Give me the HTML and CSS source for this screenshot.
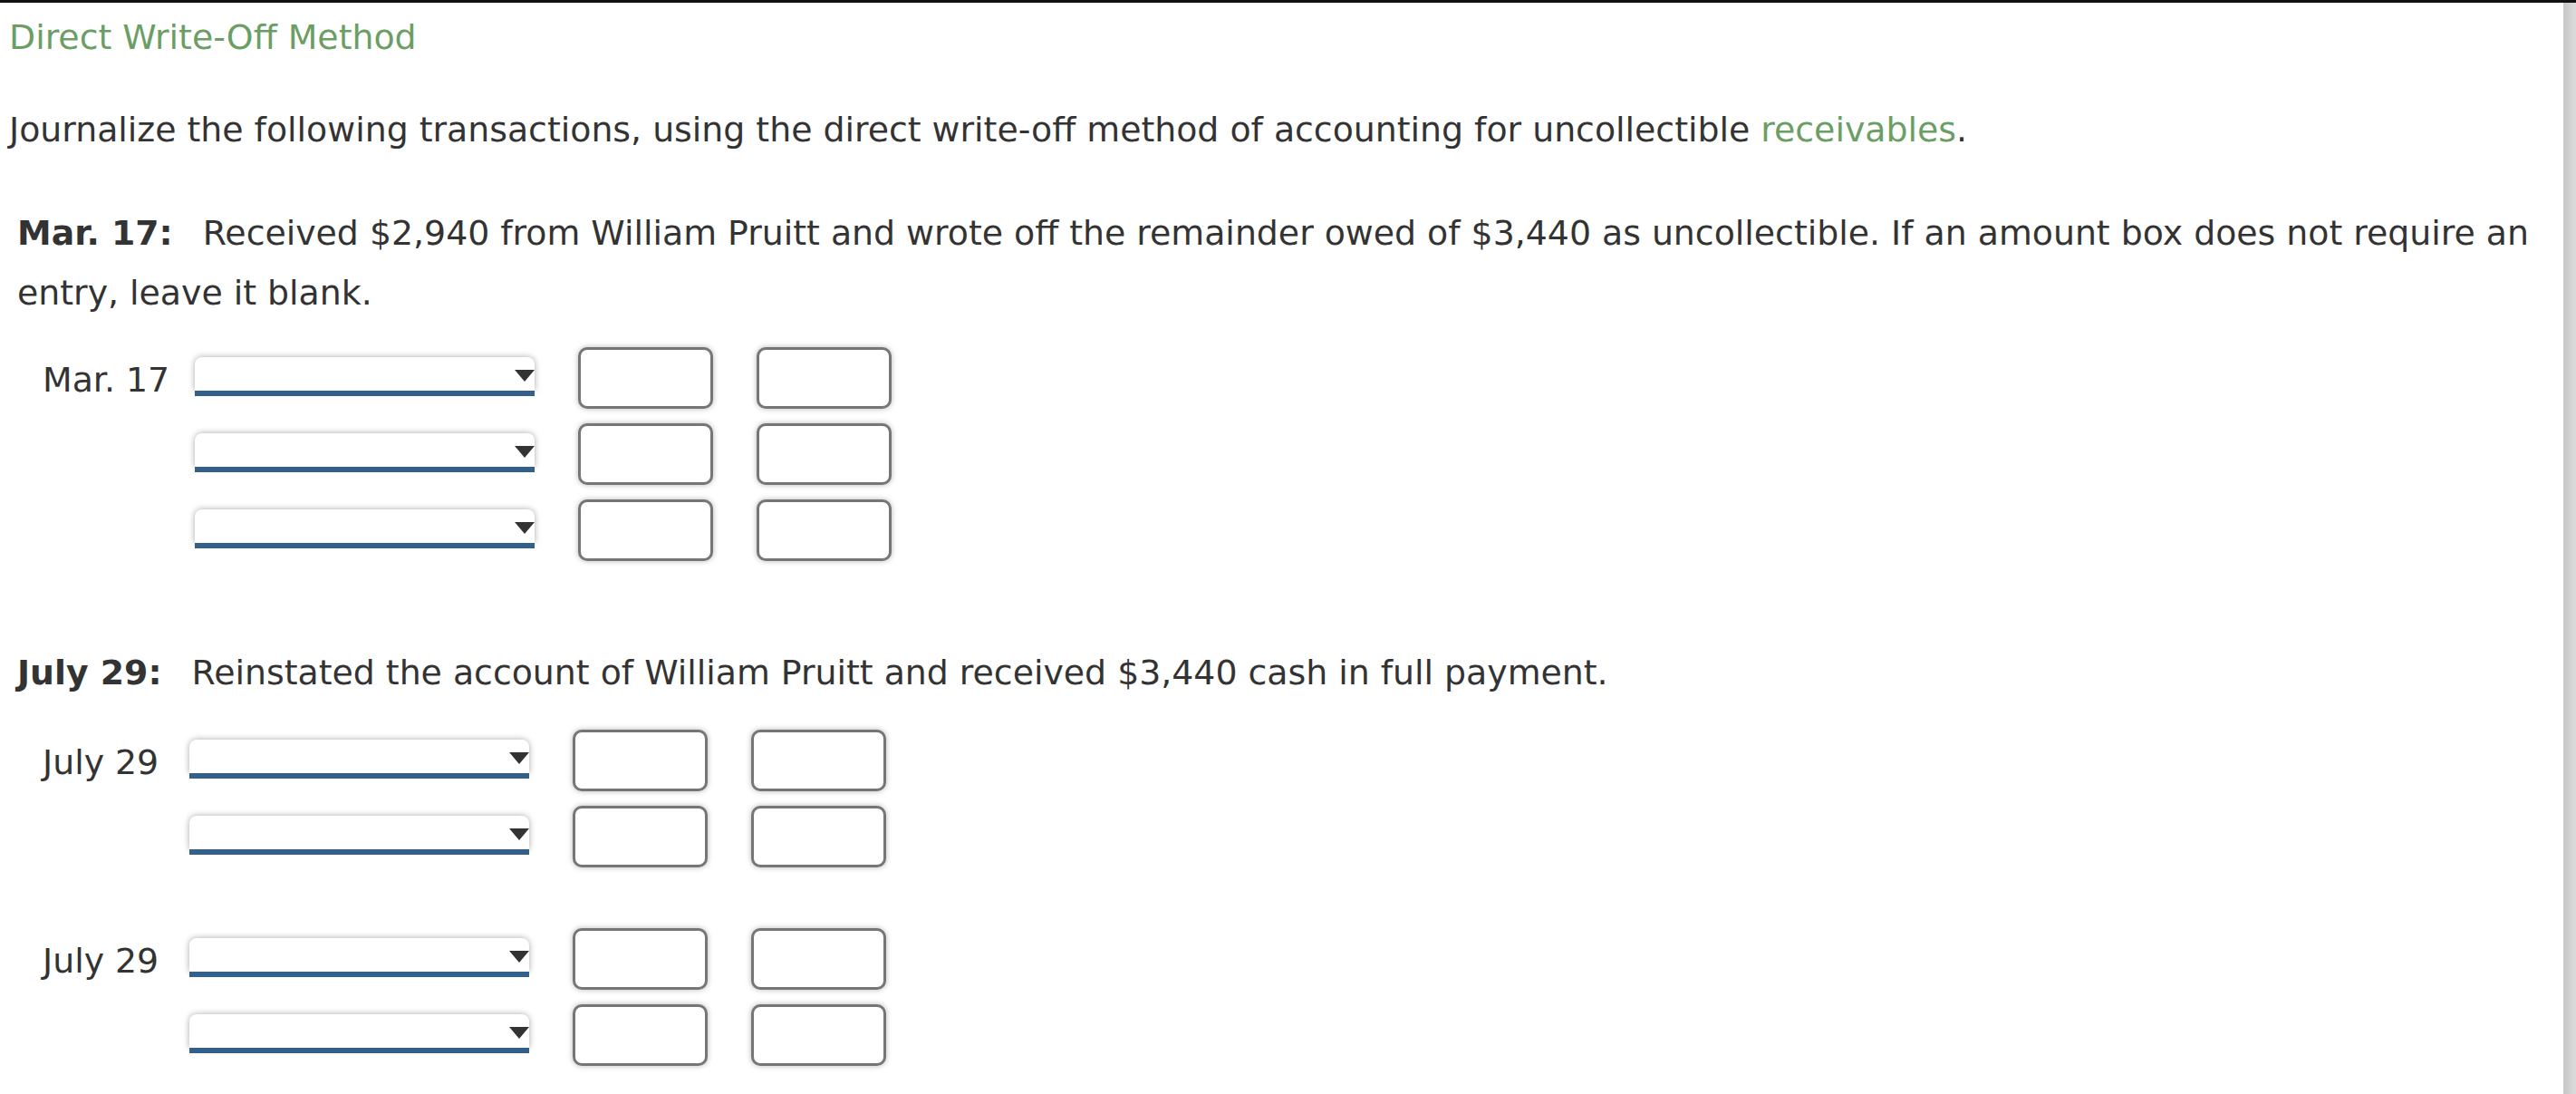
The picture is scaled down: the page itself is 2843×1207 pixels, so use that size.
FILE: index.html
```html
<!DOCTYPE html>
<html lang="en">
<head>
<meta charset="utf-8">
<title>Direct Write-Off Method</title>
<link rel="stylesheet" href="styles.css">
</head>
<body>
<div class="topbar"></div>
<div class="frame">
  <main class="page">
    <h1 class="title">Direct Write-Off Method</h1>
    <p class="intro">Journalize the following transactions, using the direct write-off method of accounting for uncollectible <span class="link">receivables</span>.</p>

    <section class="section">
      <p class="prompt"><b>Mar. 17:</b> Received $2,940 from William Pruitt and wrote off the remainder owed of $3,440 as uncollectible. If an amount box does not require an entry, leave it blank.</p>
      <div class="entry entry-mar">
        <div class="label">Mar. 17</div>
        <div class="select"><div class="select-box"><svg class="caret" width="22" height="13" viewBox="0 0 22 13"><polygon points="0,0 22,0 11,13"/></svg></div><div class="select-line"></div></div>
        <div class="amount"></div>
        <div class="amount"></div>

        <div class="label"></div>
        <div class="select"><div class="select-box"><svg class="caret" width="22" height="13" viewBox="0 0 22 13"><polygon points="0,0 22,0 11,13"/></svg></div><div class="select-line"></div></div>
        <div class="amount"></div>
        <div class="amount"></div>

        <div class="label"></div>
        <div class="select"><div class="select-box"><svg class="caret" width="22" height="13" viewBox="0 0 22 13"><polygon points="0,0 22,0 11,13"/></svg></div><div class="select-line"></div></div>
        <div class="amount"></div>
        <div class="amount"></div>
      </div>
    </section>

    <section class="section section-jul">
      <p class="prompt"><b>July 29:</b> Reinstated the account of William Pruitt and received $3,440 cash in full payment.</p>
      <div class="entry entry-jul">
        <div class="label">July 29</div>
        <div class="select"><div class="select-box"><svg class="caret" width="22" height="13" viewBox="0 0 22 13"><polygon points="0,0 22,0 11,13"/></svg></div><div class="select-line"></div></div>
        <div class="amount"></div>
        <div class="amount"></div>

        <div class="label"></div>
        <div class="select"><div class="select-box"><svg class="caret" width="22" height="13" viewBox="0 0 22 13"><polygon points="0,0 22,0 11,13"/></svg></div><div class="select-line"></div></div>
        <div class="amount"></div>
        <div class="amount"></div>
      </div>

      <div class="entry entry-jul entry-second">
        <div class="label">July 29</div>
        <div class="select"><div class="select-box"><svg class="caret" width="22" height="13" viewBox="0 0 22 13"><polygon points="0,0 22,0 11,13"/></svg></div><div class="select-line"></div></div>
        <div class="amount"></div>
        <div class="amount"></div>

        <div class="label"></div>
        <div class="select"><div class="select-box"><svg class="caret" width="22" height="13" viewBox="0 0 22 13"><polygon points="0,0 22,0 11,13"/></svg></div><div class="select-line"></div></div>
        <div class="amount"></div>
        <div class="amount"></div>
      </div>
    </section>
  </main>
  <div class="scrolltrack"></div>
</div>
</body>
</html>
```

FILE: styles.css
```css
html, body {
  margin: 0;
  padding: 0;
  background: #ffffff;
}

body {
  font-family: "DejaVu Sans", Verdana, sans-serif;
  font-size: 37.85px;
  line-height: 66px;
  color: #333333;
  height: 1207px;
  overflow: hidden;
}

.topbar {
  height: 3px;
  background: #111111;
}

.frame {
  display: flex;
  height: 1204px;
}

.page {
  flex: 1;
  padding-left: 10px;
  min-width: 0;
}

.scrolltrack {
  width: 14px;
  background: linear-gradient(to right, #c6c6c6, #dcdcdc);
}

.title {
  margin: 5px 0 0 0;
  font-size: 37.85px;
  font-weight: normal;
  line-height: 66px;
  color: #6b9e65;
}

.intro {
  margin: 36px 0 0 0;
}

.link {
  color: #6b9e65;
}

.section {
  padding-left: 9px;
  margin-top: 48px;
}

.section-jul {
  margin-top: 90px;
}

.prompt {
  margin: 0;
}

.prompt b {
  font-weight: bold;
  margin-right: 21px;
}

.entry {
  display: grid;
  grid-auto-rows: 68px;
  row-gap: 16px;
  column-gap: 48px;
  margin-top: 27px;
}

.entry-mar {
  grid-template-columns: 148px 375px 149px 149px;
}

.entry-jul {
  grid-template-columns: 142px 375px 149px 149px;
  margin-top: 30px;
}

.entry-second {
  margin-top: 67px;
}

.label {
  padding-left: 28px;
  padding-top: 4px;
  line-height: 64px;
  white-space: nowrap;
}

.select {
  align-self: start;
  margin-top: 11px;
  width: 375px;
}

.select-box {
  height: 37px;
  background: #ffffff;
  border-radius: 8px 8px 0 0;
  box-shadow: 0 0 7px rgba(0, 0, 0, 0.35);
  display: flex;
  align-items: center;
  justify-content: flex-end;
}

.caret {
  display: block;
  margin-top: 4px;
  fill: #333333;
}

.select-line {
  height: 6px;
  background: #335f8b;
}

.amount {
  box-sizing: border-box;
  width: 149px;
  height: 68px;
  border: 3px solid #767676;
  border-radius: 10px;
  background: #ffffff;
  box-shadow: 0 0 6px rgba(0, 0, 0, 0.28);
}
```
